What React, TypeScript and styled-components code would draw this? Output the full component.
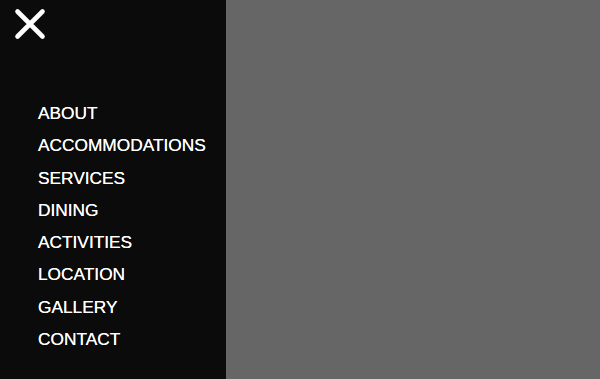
import React from "react";
import styled, { createGlobalStyle } from "styled-components";

const Global = createGlobalStyle`
  html, body { margin: 0; padding: 0; background: #666666; }
  body { font-family: "Liberation Sans", Arial, sans-serif; }
`;

const Page = styled.div`
  display: flex;
  width: 600px;
  height: 379px;
  background: #666666;
  overflow: hidden;
`;

const Sidebar = styled.nav`
  width: 226px;
  flex-shrink: 0;
  height: 100%;
  background: #0b0b0b;
  display: flex;
  flex-direction: column;
  box-sizing: border-box;
`;

const CloseButton = styled.button`
  width: 32px;
  height: 32px;
  margin: 8px 0 0 14px;
  padding: 0;
  border: none;
  background: transparent;
  display: flex;
  cursor: pointer;
`;

const Menu = styled.ul`
  list-style: none;
  margin: 57px 0 0 0;
  padding: 0 0 0 38px;
`;

const Item = styled.li`
  line-height: 32.25px;
  font-size: 17.3px;
  color: #ffffff;
  white-space: nowrap;
  text-shadow: 0 0 0.4px #ffffff;
`;

const Content = styled.main`
  flex: 1;
  background: #666666;
`;

const items = [
  "ABOUT",
  "ACCOMMODATIONS",
  "SERVICES",
  "DINING",
  "ACTIVITIES",
  "LOCATION",
  "GALLERY",
  "CONTACT",
];

export default function App() {
  return (
    <>
      <Global />
      <Page>
        <Sidebar>
          <CloseButton aria-label="Close">
            <svg width="32" height="32" viewBox="0 0 32 32">
              <path
                d="M3.5 3.5 L28.5 28.5 M28.5 3.5 L3.5 28.5"
                stroke="#ffffff"
                strokeWidth="4.6"
                strokeLinecap="round"
                fill="none"
              />
            </svg>
          </CloseButton>
          <Menu>
            {items.map((t) => (
              <Item key={t}>{t}</Item>
            ))}
          </Menu>
        </Sidebar>
        <Content />
      </Page>
    </>
  );
}
